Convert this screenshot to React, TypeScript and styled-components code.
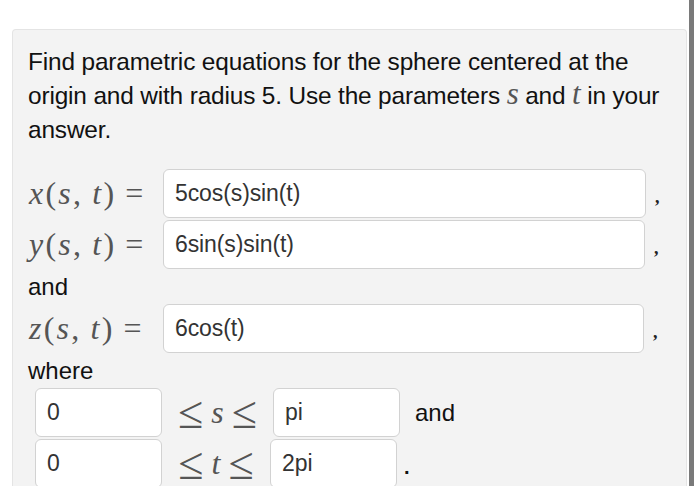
import styled, { createGlobalStyle } from "styled-components";

const Global = createGlobalStyle`
  html, body { margin: 0; padding: 0; background: #fff; }
  body { font-family: "Liberation Sans", Arial, sans-serif; color: #111; }
`;

const Page = styled.div`
  display: flex;
  align-items: stretch;
  height: 486px;
  overflow: hidden;
`;

const Card = styled.div`
  margin: 29px 0 0 12px;
  width: 675px;
  box-sizing: border-box;
  background: #f3f3f3;
  border: 1px solid #e4e4e4;
  border-bottom: none;
  border-radius: 4px 4px 0 0;
  padding: 15px 15px 0 15px;
`;

const Edge = styled.div`
  margin-left: 2px;
  width: 5px;
  background: #7a7a7a;
`;

const Question = styled.p`
  margin: 0 0 22px;
  font-size: 24.4px;
  line-height: 34px;
  letter-spacing: -0.15px;
`;

const MathVar = styled.span`
  font-family: "Liberation Serif", "Times New Roman", serif;
  font-style: italic;
  font-size: 31px;
  line-height: 20px;
  color: #555;
`;

const Row = styled.div<{ $mt?: number }>`
  display: flex;
  align-items: center;
  margin-top: ${(p) => p.$mt ?? 0}px;
`;

const Label = styled.div`
  width: 135px;
  flex: none;
  font-family: "Liberation Serif", "Times New Roman", serif;
  font-size: 32px;
  color: #555;
  white-space: nowrap;
  letter-spacing: 1.2px;
`;

const It = styled.i`
  font-style: italic;
  padding: 0 1px;
`;

const Op = styled.span`
  margin-left: 10px;
`;

const Field = styled.div<{ $w: number }>`
  box-sizing: border-box;
  width: ${(p) => p.$w}px;
  height: 49px;
  flex: none;
  background: #fff;
  border: 1px solid #d2d2d2;
  border-radius: 6px;
  padding: 0 11px;
  display: flex;
  align-items: center;
  font-size: 23px;
  letter-spacing: -0.1px;
  color: #333;
`;

const Punct = styled.span`
  margin-left: 9px;
  margin-top: 8px;
  font-family: "Liberation Serif", serif;
  font-weight: bold;
  font-size: 18px;
  color: #222;
`;

const Word = styled.div`
  font-size: 24px;
  line-height: 35px;
`;

const Ineq = styled.div<{ $w: number }>`
  width: ${(p) => p.$w}px;
  flex: none;
  display: flex;
  align-items: center;
  justify-content: center;
  gap: 7px;
  font-family: "Liberation Serif", "Times New Roman", serif;
  font-size: 32px;
  color: #555;
  white-space: nowrap;
`;

const Le = styled.span`
  font-size: 46px;
  line-height: 1;
`;

const RangeRow = styled.div<{ $mt?: number }>`
  display: flex;
  align-items: center;
  margin-left: 7px;
  margin-top: ${(p) => p.$mt ?? 0}px;
`;

const AndText = styled.span`
  margin-left: 15px;
  font-size: 24px;
`;

const Dot = styled.span`
  margin-left: 7px;
  margin-top: 8px;
  font-size: 20px;
  font-weight: bold;
`;

function Eq({ v }: { v: string }) {
  return (
    <Label>
      <It>{v}</It>(<It>s</It>, <It>t</It>)<Op>=</Op>
    </Label>
  );
}

export default function App() {
  return (
    <>
      <Global />
      <Page>
        <Card>
          <Question>
            Find parametric equations for the sphere centered at the origin and with radius 5. Use the parameters{" "}
            <MathVar>s</MathVar> and <MathVar>t</MathVar> in your answer.
          </Question>
          <Row>
            <Eq v="x" />
            <Field $w={483}>5cos(s)sin(t)</Field>
            <Punct>,</Punct>
          </Row>
          <Row $mt={2}>
            <Eq v="y" />
            <Field $w={482}>6sin(s)sin(t)</Field>
            <Punct>,</Punct>
          </Row>
          <Word>and</Word>
          <Row>
            <Eq v="z" />
            <Field $w={481}>6cos(t)</Field>
            <Punct>,</Punct>
          </Row>
          <Word>where</Word>
          <RangeRow>
            <Field $w={127}>0</Field>
            <Ineq $w={111}>
              <Le>≤</Le>
              <It>s</It>
              <Le>≤</Le>
            </Ineq>
            <Field $w={127}>pi</Field>
            <AndText>and</AndText>
          </RangeRow>
          <RangeRow $mt={2}>
            <Field $w={127}>0</Field>
            <Ineq $w={108}>
              <Le>≤</Le>
              <It>t</It>
              <Le>≤</Le>
            </Ineq>
            <Field $w={127}>2pi</Field>
            <Dot>.</Dot>
          </RangeRow>
        </Card>
        <Edge />
      </Page>
    </>
  );
}
